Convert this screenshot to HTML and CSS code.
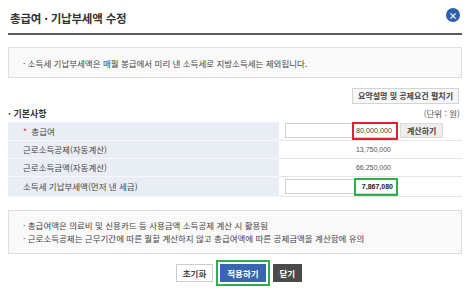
FILE: index.html
```html
<html lang="ko">
  <head>
    <meta charset="UTF-8" />
    <title>총급여 · 기납부세액 수정</title>
    <link rel="stylesheet" href="styles.css">
  </head>
  <body>
    <div class="popup">
      <div class="header">
        <h1 class="title">총급여 · 기납부세액 수정</h1>
        <span class="close">&times;</span>
      </div>

      <div class="info-box">
        <p>· 소득세 기납부세액은 매월 봉급에서 미리 낸 소득세로 지방소득세는 제외됩니다.</p>
      </div>

      <div class="toolbar">
        <button class="btn-sub">요약설명 및 공제요건 펼치기</button>
      </div>

      <div class="section-head">
        <span class="section-title">· 기본사항</span>
        <span class="unit">(단위 : 원)</span>
      </div>

      <table class="form-table">
        <tr>
          <th><span class="req">*</span> 총급여</th>
          <td>
            <div class="field">
              <input type="text" class="num-input" value="80,000,000" />
              <span class="mark mark-red"></span>
              <button class="btn-calc">계산하기</button>
            </div>
          </td>
        </tr>
        <tr>
          <th>근로소득공제(자동계산)</th>
          <td><span class="num">13,750,000</span></td>
        </tr>
        <tr>
          <th>근로소득금액(자동계산)</th>
          <td><span class="num">66,250,000</span></td>
        </tr>
        <tr class="last">
          <th>소득세 기납부세액(먼저 낸 세금)</th>
          <td>
            <div class="field">
              <input type="text" class="num-input strong" value="7,867,080" />
              <span class="mark mark-green"></span>
            </div>
          </td>
        </tr>
      </table>

      <div class="note-box">
        <p>· 총급여액은 의료비 및 신용카드 등 사용금액 소득공제 계산 시 활용됨</p>
        <p>· 근로소득공제는 근무기간에 따른 월할 계산하지 않고 총급여액에 따른 공제금액을 계산함에 유의</p>
      </div>

      <div class="actions">
        <button class="btn btn-reset">초기화</button>
        <span class="apply-wrap"><button class="btn btn-apply">적용하기</button></span>
        <button class="btn btn-close">닫기</button>
      </div>
    </div>
  </body>
</html>
```

FILE: styles.css
```css
body {
  font-family: "Noto Sans CJK KR", "Noto Sans", sans-serif;
  margin: 0;
  padding: 0;
  background-color: #fff;
  color: #444;
  font-size: 9px;
}

.popup {
  width: 454px;
  padding: 0 12px 0 8px;
}

.header {
  display: flex;
  align-items: center;
  justify-content: space-between;
  height: 30px;
  padding-top: 3px;
  border-bottom: 2px solid #5a5a5a;
}

.title {
  margin: 0 0 0 2px;
  font-size: 11.5px;
  font-weight: bold;
  color: #333;
  letter-spacing: -0.2px;
}

.close {
  display: flex;
  align-items: center;
  justify-content: center;
  width: 14px;
  height: 14px;
  margin-right: 2px;
  margin-top: -6px;
  border-radius: 50%;
  background-color: #2f5fa8;
  color: #fff;
  font-size: 9px;
  font-weight: bold;
  line-height: 1;
}

.info-box {
  margin-top: 12px;
  height: 29px;
  display: flex;
  align-items: center;
  padding: 0 14px;
  border: 1px solid #dedede;
  background-color: #f9f9f9;
}

.info-box p,
.note-box p {
  margin: 0;
  font-size: 8.5px;
  color: #444;
}

.toolbar {
  display: flex;
  justify-content: flex-end;
  margin-top: 10px;
  padding-right: 3px;
}

.btn-sub {
  height: 16px;
  padding: 0 5px;
  border: 1px solid #d4d4d4;
  background-color: #f7f7f7;
  font-family: inherit;
  font-size: 8px;
  font-weight: bold;
  color: #444;
  line-height: 14px;
}

.section-head {
  display: flex;
  justify-content: space-between;
  align-items: center;
  height: 18px;
  padding-right: 2px;
}

.section-title {
  font-weight: bold;
  font-size: 9px;
  color: #333;
}

.unit {
  font-size: 8.5px;
  color: #555;
}

.form-table {
  width: 100%;
  border-collapse: collapse;
}

.form-table th {
  box-sizing: border-box;
  width: 271px;
  height: 18px;
  padding: 0 0 0 15px;
  text-align: left;
  font-weight: normal;
  font-size: 8.5px;
  color: #444;
  background-color: #e9edf4;
  border-bottom: 1px solid #f6f7fa;
}

.form-table td {
  height: 18px;
  padding: 0 0 0 6px;
  border-bottom: 1px solid #e6e6e6;
}

.form-table tr.last th,
.form-table tr.last td {
  height: 20px;
}

.req {
  color: #d0343a;
  margin-right: 2px;
}

.field {
  position: relative;
  display: flex;
  align-items: center;
}

.num-input {
  width: 113px;
  height: 15px;
  padding: 0 5px 0 0;
  border: 1px solid #cfcfcf;
  text-align: right;
  font-family: "Liberation Sans", Arial, sans-serif;
  font-size: 7.2px;
  color: #444;
  box-sizing: border-box;
}

.num-input.strong {
  color: #222;
  font-weight: bold;
  font-size: 7px;
  padding-right: 4px;
}

.num {
  display: block;
  width: 106px;
  text-align: right;
  font-family: "Liberation Sans", Arial, sans-serif;
  font-size: 7px;
  color: #555;
}

.mark {
  position: absolute;
  left: 67px;
  width: 42px;
  height: 14px;
}

.mark-red {
  top: -1px;
  border: 2px solid #d9232e;
}

.mark-green {
  top: -1px;
  left: 69px;
  width: 40px;
  border: 2px solid #2fae49;
}

.btn-calc {
  height: 15px;
  margin-left: 2px;
  padding: 0 6px;
  border: 1px solid #dcdcdc;
  background-color: #ededed;
  font-family: inherit;
  font-size: 8px;
  font-weight: bold;
  color: #444;
  line-height: 13px;
}

.note-box {
  margin-top: 13px;
  height: 42px;
  display: flex;
  flex-direction: column;
  justify-content: center;
  gap: 1px;
  padding: 0 14px;
  border: 1px solid #dedede;
  background-color: #f9f9f9;
}

.actions {
  display: flex;
  justify-content: center;
  align-items: center;
  gap: 3px;
  margin-top: 6px;
  padding-left: 8px;
}

.btn {
  height: 18px;
  padding: 0 6px;
  border: 1px solid #ccc;
  font-family: inherit;
  font-size: 8.5px;
  font-weight: bold;
  line-height: 16px;
}

.btn-reset {
  background-color: #fff;
  color: #444;
}

.apply-wrap {
  display: inline-flex;
  padding: 2px;
  border: 2px solid #2fae49;
}

.btn-apply {
  background-color: #3767b1;
  border-color: #3767b1;
  color: #fff;
}

.btn-close {
  background-color: #4a4a4a;
  border-color: #4a4a4a;
  color: #fff;
}
```
